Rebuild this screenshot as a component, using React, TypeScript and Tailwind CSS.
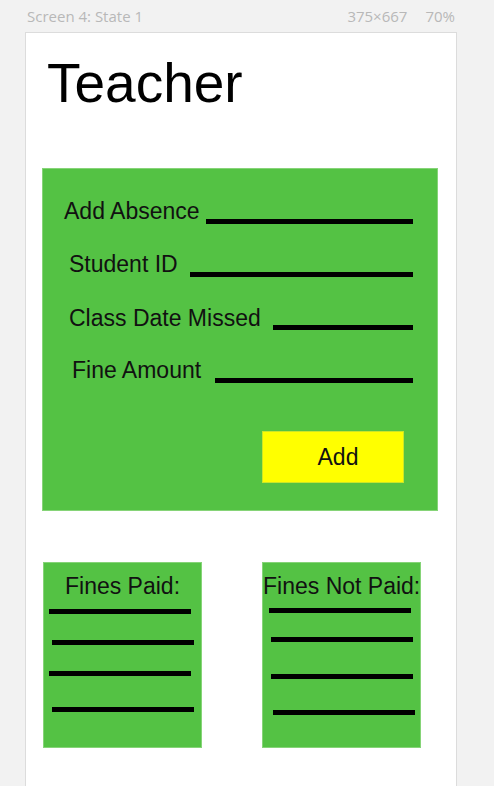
const fieldRows = [
  { label: "Add Absence", pl: "pl-[21px]", mt: "mt-[31px]", line: "w-[207px]", lineTop: "mt-[19px]" },
  { label: "Student ID", pl: "pl-[26px]", mt: "mt-[31px]", line: "w-[223px]", lineTop: "mt-[19px]" },
  { label: "Class Date Missed", pl: "pl-[26px]", mt: "mt-[32px]", line: "w-[140px]", lineTop: "mt-[18px]" },
  { label: "Fine Amount", pl: "pl-[29px]", mt: "mt-[30px]", line: "w-[198px]", lineTop: "mt-[19px]" },
];

const paidLines = [
  { cls: "ml-[5px] mt-[12px]" },
  { cls: "ml-[8px] mt-[26px]" },
  { cls: "ml-[5px] mt-[26px]" },
  { cls: "ml-[8px] mt-[31px]" },
];

const unpaidLines = [
  { cls: "ml-[6px] mt-[11px]" },
  { cls: "ml-[8px] mt-[24px]" },
  { cls: "ml-[8px] mt-[32px]" },
  { cls: "ml-[10px] mt-[31px]" },
];

function FinesBox({ title, lines }: { title: string; lines: { cls: string }[] }) {
  return (
    <div className="w-[159px] h-[186px] bg-[#54c244] border border-[#86d478] flex flex-col pt-[12px]">
      <div className="text-center whitespace-nowrap text-[23px] leading-[22px] text-[#111]">{title}</div>
      {lines.map((l, i) => (
        <div key={i} className={`w-[142px] h-[5px] bg-black ${l.cls}`} />
      ))}
    </div>
  );
}

export default function App() {
  return (
    <div className="w-[494px] h-[797px] bg-white font-['Liberation_Sans',Arial,sans-serif] overflow-hidden">
      <div className="h-[786px] bg-[#f2f2f2] flex flex-col">
        {/* artboard caption */}
        <div className="h-[32px] flex items-start pt-[6px] pl-[27px] pr-[39px] text-[15px] leading-[20px] text-[#b8b8b8] font-['Open_Sans',sans-serif]">
          <span>Screen 4: State 1</span>
          <span className="ml-auto">375×667</span>
          <span className="ml-[18px]">70%</span>
        </div>

        {/* phone frame */}
        <div className="ml-[25px] w-[432px] flex-1 bg-white border border-b-0 border-[#dcdcdc] flex flex-col">
          <h1 className="pl-[21px] pt-[23px] text-[55px] leading-[54px] text-black">Teacher</h1>

          <div className="ml-[16px] mt-[58px] w-[396px] h-[343px] bg-[#54c244] border border-[#86d478] flex flex-col text-[23px] leading-[22px] text-[#111]">
            {fieldRows.map((r) => (
              <div key={r.label} className={`flex items-start h-[22px] pr-[24px] ${r.pl} ${r.mt}`}>
                <span className="whitespace-nowrap">{r.label}</span>
                <div className={`ml-auto h-[5px] bg-black ${r.line} ${r.lineTop}`} />
              </div>
            ))}

            <button className="ml-[219px] mt-[50px] w-[142px] h-[52px] bg-[#ffff00] border border-[#c9e52a] flex items-center justify-center pl-[10px] text-[23px] text-[#111]">
              Add
            </button>
          </div>

          <div className="flex mt-[51px] ml-[17px] gap-[60px]">
            <FinesBox title="Fines Paid:" lines={paidLines} />
            <FinesBox title="Fines Not Paid:" lines={unpaidLines} />
          </div>
        </div>
      </div>
    </div>
  );
}
